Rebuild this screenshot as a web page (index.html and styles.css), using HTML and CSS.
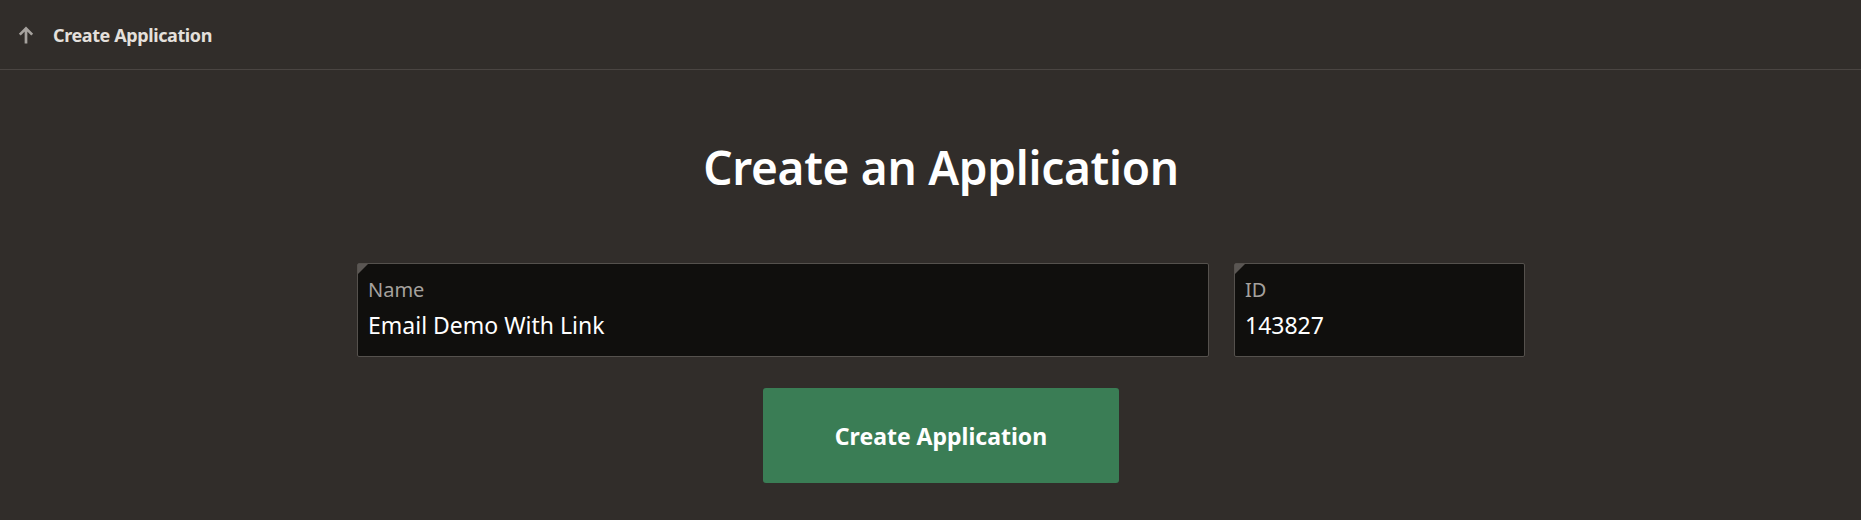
FILE: index.html
```html
<!DOCTYPE html>
<html lang="en">
<head>
<meta charset="utf-8">
<title>Create Application</title>
<link rel="stylesheet" href="styles.css">
</head>
<body>
<header class="topbar">
  <svg class="up-icon" viewBox="0 0 16 18" width="16" height="18" aria-hidden="true">
    <path d="M8 17.5V2.5M1.8 8.6L8 2.4l6.2 6.2" fill="none" stroke="currentColor" stroke-width="2.7"/>
  </svg>
  <span class="topbar-title">Create Application</span>
</header>
<main class="content">
  <h1 class="page-title">Create an Application</h1>
  <div class="fields">
    <div class="field field-name">
      <label class="field-label">Name</label>
      <div class="field-value">Email Demo With Link</div>
    </div>
    <div class="field field-id">
      <label class="field-label">ID</label>
      <div class="field-value">143827</div>
    </div>
  </div>
  <button class="create-btn">Create Application</button>
</main>
</body>
</html>
```
FILE: styles.css
```css
html, body {
  margin: 0;
  padding: 0;
  background: #312d2a;
  font-family: "Noto Sans", "Open Sans", sans-serif;
  color: #ffffff;
}

.topbar {
  height: 69px;
  border-bottom: 1px solid #4a4542;
  display: flex;
  align-items: center;
  padding-left: 18px;
  gap: 19px;
}

.up-icon {
  color: #a6a29e;
  display: block;
}

.topbar-title {
  font-size: 18px;
  font-weight: 700;
  letter-spacing: -0.4px;
  color: #e4e0dc;
}

.content {
  display: flex;
  flex-direction: column;
  align-items: center;
  padding-left: 21px;
}

.page-title {
  margin: 65px 0 0;
  font-size: 46px;
  font-weight: 600;
  letter-spacing: -0.3px;
  line-height: 64px;
}

.fields {
  display: flex;
  gap: 25px;
  margin-top: 64px;
}

.field {
  position: relative;
  box-sizing: border-box;
  height: 94px;
  background: #100f0d;
  border: 1px solid #55514d;
  border-radius: 2px;
  padding: 14px 10px 0;
  display: flex;
  flex-direction: column;
}

.field::before {
  content: "";
  position: absolute;
  top: 0;
  left: 0;
  border-top: 10px solid #5a5653;
  border-right: 10px solid transparent;
}

.field-name { width: 852px; }
.field-id { width: 291px; }

.field-label {
  font-size: 20px;
  color: #a5a19d;
  line-height: 24px;
}

.field-value {
  font-size: 23px;
  line-height: 30px;
  margin-top: 8px;
  color: #ffffff;
}

.create-btn {
  margin-top: 31px;
  width: 356px;
  height: 95px;
  background: #3a7d55;
  border: none;
  border-radius: 3px;
  color: #ffffff;
  font-family: "Noto Sans", "Open Sans", sans-serif;
  font-size: 23px;
  font-weight: 700;
}
```
